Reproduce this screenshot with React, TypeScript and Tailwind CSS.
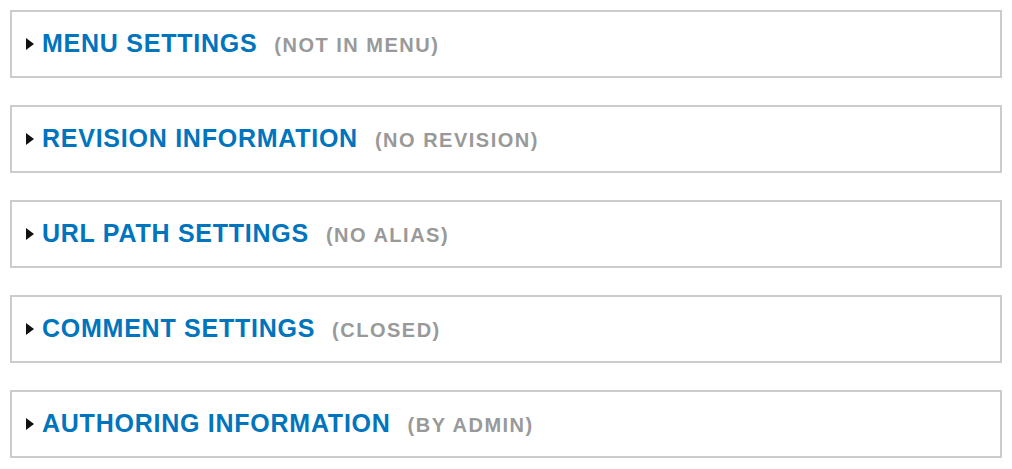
const sections = [
  { title: "MENU SETTINGS", summary: "(NOT IN MENU)" },
  { title: "REVISION INFORMATION", summary: "(NO REVISION)" },
  { title: "URL PATH SETTINGS", summary: "(NO ALIAS)" },
  { title: "COMMENT SETTINGS", summary: "(CLOSED)" },
  { title: "AUTHORING INFORMATION", summary: "(BY ADMIN)" },
];

const Arrow = () => (
  <svg width="8" height="12" viewBox="0 0 8 12" className="mr-[8px] shrink-0">
    <path d="M0 0 L8 6 L0 12 Z" fill="#111" />
  </svg>
);

export default function App() {
  return (
    <div className="flex flex-col gap-[27px] pt-[10px] pl-[10px] pr-[10px] font-['Liberation_Sans',Arial,sans-serif] w-[1012px] bg-white">
      {sections.map((s) => (
        <div
          key={s.title}
          className="flex items-center h-[68px] w-[992px] border-2 border-[#cccccc] pl-[14px]"
        >
          <Arrow />
          <span className="text-[25px] font-bold text-[#0074bd] tracking-[0.75px]">
            {s.title}
          </span>
          <span className="ml-[17px] mt-[2px] text-[20px] font-bold text-[#999999] tracking-[1.5px]">
            {s.summary}
          </span>
        </div>
      ))}
    </div>
  );
}
